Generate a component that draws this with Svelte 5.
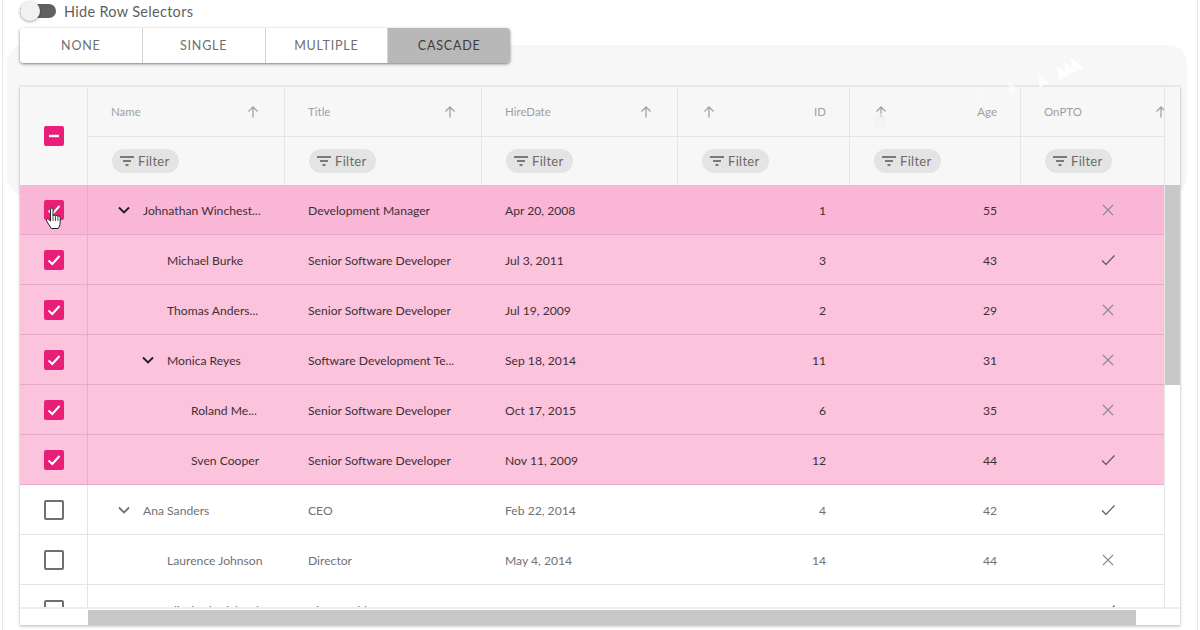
<script>
  const columns = [
    { label: 'Name', align: 'left' },
    { label: 'Title', align: 'left' },
    { label: 'HireDate', align: 'left' },
    { label: 'ID', align: 'right' },
    { label: 'Age', align: 'right' },
    { label: 'OnPTO', align: 'left' }
  ];

  const rows = [
    { name: 'Johnathan Winchest...', level: 0, open: true, title: 'Development Manager', date: 'Apr 20, 2008', id: 1, age: 55, pto: false, selected: true, hover: true },
    { name: 'Michael Burke', level: 1, title: 'Senior Software Developer', date: 'Jul 3, 2011', id: 3, age: 43, pto: true, selected: true },
    { name: 'Thomas Anders...', level: 1, title: 'Senior Software Developer', date: 'Jul 19, 2009', id: 2, age: 29, pto: false, selected: true },
    { name: 'Monica Reyes', level: 1, open: true, title: 'Software Development Te...', date: 'Sep 18, 2014', id: 11, age: 31, pto: false, selected: true },
    { name: 'Roland Me...', level: 2, title: 'Senior Software Developer', date: 'Oct 17, 2015', id: 6, age: 35, pto: false, selected: true },
    { name: 'Sven Cooper', level: 2, title: 'Senior Software Developer', date: 'Nov 11, 2009', id: 12, age: 44, pto: true, selected: true },
    { name: 'Ana Sanders', level: 0, open: true, title: 'CEO', date: 'Feb 22, 2014', id: 4, age: 42, pto: true },
    { name: 'Laurence Johnson', level: 1, title: 'Director', date: 'May 4, 2014', id: 14, age: 44, pto: false },
    { name: 'Elizabeth Richards', level: 1, open: true, title: 'Vice President', date: 'Dec 9, 2013', id: 5, age: 35, pto: true }
  ];

  // faint arrows the mouse left behind in the recording
  const trail = [
    { x: 976, y: 90, o: 0.25 },
    { x: 1008, y: 81, o: 0.5 },
    { x: 1038, y: 74, o: 0.8 },
    { x: 1057, y: 66, o: 0.9 },
    { x: 1064, y: 62, o: 0.9 },
    { x: 1071, y: 58, o: 0.9 }
  ];

  const modes = ['None', 'Single', 'Multiple', 'Cascade'];
  let mode = $state('Cascade');
  let hideSelectors = $state(false);
</script>

<div class="page">
  <div class="backdrop"></div>

  <label class="toggle">
    <input type="checkbox" bind:checked={hideSelectors} />
    <span class="track"><span class="thumb"></span></span>
    <span>Hide Row Selectors</span>
  </label>

  <div class="modes">
    {#each modes as m}
      <button class:active={mode === m} onclick={() => (mode = m)}>{m}</button>
    {/each}
  </div>

  <div class="grid">
    <div class="main">
      <div class="head">
        <div class="select-head">
          <span class="check on">
            <svg viewBox="0 0 20 20" width="20" height="20"><path d="M5 10h10" stroke="#fff" stroke-width="2.4" fill="none" /></svg>
          </span>
        </div>
        <div class="head-cols">
          {#each columns as col}
            <div class="head-title" class:right={col.align === 'right'}>
              <span class="label">{col.label}</span>
              <svg class="sort" viewBox="0 0 14 14" width="14" height="14"><path d="M7 12.500V2M2.500 6.500 7 2l4.500 4.500" stroke="#a3a3a3" stroke-width="1.300" fill="none" /></svg>
            </div>
          {/each}
          {#each columns as col}
            <div class="head-filter">
              <span class="chip">
                <svg viewBox="0 0 16 12" width="16" height="12"><path d="M1 2h14M4 6h8M6.500 10h3" stroke="#555" stroke-width="1.500" fill="none" /></svg>
                Filter
              </span>
            </div>
          {/each}
        </div>
      </div>

      <div class="body">
        {#each rows as row, i}
          <div class="row" class:selected={row.selected} class:first={i === 0}>
            <div class="cell select">
              <span class="check" class:on={row.selected}>
                {#if row.selected}
                  <svg viewBox="0 0 20 20" width="20" height="20"><path d="M4.500 10.500 8.300 14l7.200-8" stroke="#fff" stroke-width="2" fill="none" /></svg>
                {/if}
              </span>
              {#if row.hover}
                <svg class="hand" viewBox="0 0 18 24" width="18" height="24">
                  <path d="M5.500 2.200c0-1.500 2.500-1.500 2.500 0V9c0-1 2.300-1.300 2.500.2 0-1 2.300-1.200 2.400.4 0-.9 2.200-1 2.300.6v5.300c0 3-1.300 4.500-2 6H6.300L1.600 14c-1-1.700.9-3 2.200-1.700l1.700 1.900z" fill="#fff" stroke="#222" stroke-width="1" stroke-linejoin="round" />
                  <path d="M8 9v5M10.500 9.300V14M12.900 9.700V14" stroke="#222" stroke-width=".8" fill="none" />
                </svg>
              {/if}
            </div>
            <div class="cell name" class:lvl1={row.level === 1} class:lvl2={row.level === 2}>
              {#if row.open}
                <svg class="chevron" viewBox="0 0 14 10" width="14" height="10"><path d="M2 2.500 7 7.500l5-5" stroke="currentColor" stroke-width="1.800" fill="none" /></svg>
              {/if}
              <span>{row.name}</span>
            </div>
            <div class="cell">{row.title}</div>
            <div class="cell">{row.date}</div>
            <div class="cell num">{row.id}</div>
            <div class="cell num">{row.age}</div>
            <div class="cell bool">
              {#if row.pto}
                <svg viewBox="0 0 14 12" width="14" height="12"><path d="M1 6.500 5 10.500 13.500 1.500" stroke="#555" stroke-width="1.100" fill="none" /></svg>
              {:else}
                <svg viewBox="0 0 12 12" width="12" height="12"><path d="M1 1l10 10M11 1 1 11" stroke="#8c8c8c" stroke-width="1.100" fill="none" /></svg>
              {/if}
            </div>
          </div>
        {/each}
      </div>
    </div>

    <div class="vbar">
      <div class="vbar-head"></div>
      <div class="vbar-track"><div class="vbar-thumb"></div></div>
    </div>

    <div class="hbar">
      <div class="hbar-thumb"></div>
    </div>
  </div>

  <svg class="trail" viewBox="0 0 1200 630" width="1200" height="630" aria-hidden="true">
    <ellipse cx="880" cy="122" rx="7" ry="9" fill="#f2f2f2" opacity="0.6" />
    {#each trail as t}
      <path d="M{t.x} {t.y}l2 15 4-4 7-1z" fill="#fff" opacity={t.o} />
    {/each}
  </svg>
</div>

<style>
  :global(body) {
    margin: 0;
    font-family: Lato, 'Noto Sans', Arial, sans-serif;
    background: #fff;
  }

  .page {
    position: relative;
    box-sizing: border-box;
    height: 630px;
    overflow: hidden;
    padding: 0 0 0 20px;
    background: linear-gradient(90deg, #fff 2px, #e9e9e9 2px, #e9e9e9 3px, transparent 3px),
      linear-gradient(270deg, #fff 2px, #e9e9e9 2px, #e9e9e9 3px, transparent 3px);
  }

  .backdrop {
    position: absolute;
    left: 7px;
    top: 45px;
    width: 1180px;
    height: 150px;
    background: #f7f7f7;
    border-radius: 18px;
  }

  .trail {
    position: absolute;
    left: 0;
    top: 0;
    pointer-events: none;
  }

  .toggle {
    position: relative;
    display: flex;
    align-items: center;
    gap: 8px;
    height: 22px;
    font-size: 14.500px;
    color: #5f5f5f;
    letter-spacing: 0.300px;
    cursor: pointer;
  }

  .toggle input {
    display: none;
  }

  .track {
    position: relative;
    display: block;
    width: 36px;
    height: 14px;
    border-radius: 7px;
    background: #616161;
  }

  .thumb {
    position: absolute;
    left: 0;
    top: -3px;
    width: 20px;
    height: 20px;
    border-radius: 50%;
    background: #f1f1f1;
    box-shadow: 0 1px 3px rgba(0, 0, 0, 0.35);
  }

  .modes {
    position: relative;
    display: flex;
    width: 490px;
    height: 35px;
    margin-top: 6px;
    border-radius: 4px;
    box-shadow: 0 1px 3px rgba(0, 0, 0, 0.5);
    overflow: hidden;
  }

  .modes button {
    flex: 1;
    border: 0;
    border-right: 1px solid #d4d4d4;
    background: #fff;
    font: inherit;
    font-size: 12.500px;
    letter-spacing: 0.800px;
    text-transform: uppercase;
    color: #6f6f6f;
    cursor: pointer;
    padding: 0;
  }

  .modes button:last-child {
    border-right: 0;
  }

  .modes button.active {
    background: #b8b8b8;
    color: #3c3c3c;
  }

  .grid {
    position: relative;
    display: grid;
    grid-template-columns: 1145px 15px;
    grid-template-rows: 521px 18px;
    width: 1160px;
    margin-top: 23px;
    box-shadow: 0 1px 3px rgba(0, 0, 0, 0.3);
    background: #fff;
    font-size: 12.150px;
  }

  .main {
    overflow: hidden;
    border-right: 1px solid #e5e5e5;
    box-sizing: border-box;
  }

  .head {
    display: flex;
    height: 99px;
    background: #f7f7f7;
    border-top: 1px solid #e7e7e7;
    box-sizing: border-box;
  }

  .select-head {
    display: flex;
    align-items: center;
    justify-content: center;
    width: 68px;
    flex: none;
    box-sizing: border-box;
    border-right: 1px solid #e5e5e5;
  }

  .head-cols {
    display: grid;
    grid-template-columns: 197px 197px 196px 172px 171px 144px;
    grid-template-rows: 50px 48px;
  }

  .head-title {
    display: flex;
    align-items: center;
    justify-content: space-between;
    padding: 0 24px 0 23px;
    border-right: 1px solid #e5e5e5;
    border-bottom: 1px solid #e5e5e5;
    box-sizing: border-box;
    font-size: 11.500px;
    color: #a0a0a0;
    overflow: hidden;
  }

  .head-title:nth-child(6) {
    padding-right: 0;
    border-right: 0;
  }

  .head-title:nth-child(6) .sort {
    margin-right: -3px;
  }

  .head-title.right {
    flex-direction: row-reverse;
    padding: 0 23px 0 24px;
  }

  .sort {
    flex: none;
  }

  .head-filter {
    display: flex;
    align-items: center;
    padding: 0 24px;
    border-right: 1px solid #e5e5e5;
    box-sizing: border-box;
  }

  .head-filter:last-child {
    border-right: 0;
  }

  .chip {
    display: inline-flex;
    align-items: center;
    gap: 3px;
    box-sizing: border-box;
    width: 67px;
    height: 24px;
    padding-left: 7px;
    border-radius: 12px;
    background: #e4e4e4;
    color: #6a6a6a;
    font-size: 13px;
    letter-spacing: 0.300px;
  }

  .body {
    height: 422px;
    overflow: hidden;
  }

  .row {
    display: grid;
    grid-template-columns: 68px 197px 197px 196px 172px 171px 144px;
    height: 50px;
    box-sizing: border-box;
    border-bottom: 1px solid #e5e5e5;
    color: #717171;
  }

  .row.selected {
    background: #fbc3dc;
    border-bottom-color: #e9a9c6;
    color: #3f3037;
  }

  .row.selected.first {
    background: #f9b6d6;
  }

  .cell {
    display: flex;
    align-items: center;
    padding: 1px 24px 0 23px;
    white-space: nowrap;
    overflow: hidden;
  }

  .select {
    position: relative;
    justify-content: center;
    padding: 0;
    overflow: visible;
    border-right: 1px solid #e5e5e5;
  }

  .selected .select {
    border-right-color: #eeaccb;
  }

  .name {
    gap: 12px;
    padding-left: 29px;
  }

  .name.lvl1 {
    padding-left: 79px;
  }

  .name.lvl1:has(.chevron) {
    padding-left: 53px;
  }

  .name.lvl2 {
    padding-left: 103px;
  }

  .chevron {
    flex: none;
  }

  .selected .chevron {
    color: #1d1d1d;
  }

  .num {
    justify-content: flex-end;
  }

  .bool {
    justify-content: center;
    padding: 0 0 0 30px;
  }

  .check {
    display: flex;
    align-items: center;
    justify-content: center;
    box-sizing: border-box;
    width: 20px;
    height: 20px;
    border: 2px solid #6f6f6f;
    border-radius: 2px;
  }

  .check.on {
    background: #e91e78;
    border: 0;
  }

  .hand {
    position: absolute;
    left: 25px;
    top: 22px;
  }

  .vbar {
    display: flex;
    flex-direction: column;
    background: #fff;
  }

  .vbar-head {
    height: 99px;
    background: #f7f7f7;
    border-top: 1px solid #e7e7e7;
    box-sizing: border-box;
  }

  .vbar-track {
    flex: 1;
  }

  .vbar-thumb {
    height: 200px;
    background: #c8c8c8;
  }

  .hbar {
    grid-column: 1 / 3;
    box-sizing: border-box;
    padding: 1px 44px 0 68px;
    background: #fff;
    border-top: 2px solid #eee;
  }

  .hbar-thumb {
    height: 15px;
    background: #c8c8c8;
  }
</style>
